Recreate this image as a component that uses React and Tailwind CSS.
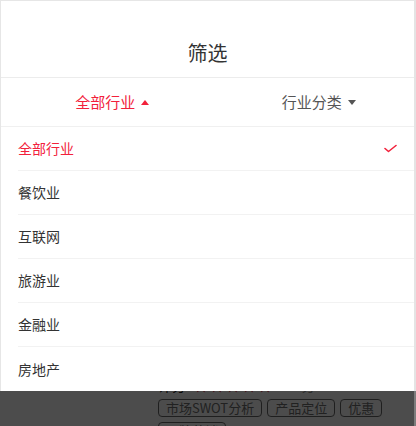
import React from "react";

const industries = ["全部行业", "餐饮业", "互联网", "旅游业", "金融业", "房地产"];

function Caret({ up, color }) {
  return up ? (
    <span
      className="inline-block h-0 w-0 border-x-[4px] border-b-[5px] border-x-transparent"
      style={{ borderBottomColor: color }}
    />
  ) : (
    <span
      className="inline-block h-0 w-0 border-x-[4px] border-t-[5px] border-x-transparent"
      style={{ borderTopColor: color }}
    />
  );
}

function Tag({ children }) {
  return (
    <span className="rounded-[4px] border border-[#6a6a6a] px-[7px] text-[13px] leading-[16px] text-[#707070]">
      {children}
    </span>
  );
}

export default function App() {
  return (
    <div
      className="flex h-[426px] w-[416px] overflow-hidden bg-white"
      style={{ fontFamily: '"Noto Sans CJK SC", "Noto Sans", sans-serif' }}
    >
      <div className="relative h-full w-[414px]">
        {/* page content behind the drawer */}
        <div className="flex flex-col pl-[158px] pt-[377px]">
          <div className="flex items-center gap-[8px] text-[14px] leading-[16px]">
            <span className="text-[#222]">评分</span>
            <span className="tracking-[2px] text-[#e0182f]">★★★★★</span>
            <span className="text-[#999]">4.8分</span>
          </div>
          <div className="mt-[6px] flex gap-[5px]">
            <Tag>市场SWOT分析</Tag>
            <Tag>产品定位</Tag>
            <Tag>优惠</Tag>
          </div>
          <div className="mt-[5px] flex gap-[5px]">
            <Tag>品牌营销</Tag>
          </div>
        </div>

        {/* dim mask */}
        <div className="absolute inset-0 bg-black/70" />

        {/* filter drawer */}
        <div className="absolute inset-x-0 top-0 flex flex-col border-l border-t border-[#e6e6e6] bg-white">
          <div className="flex h-[77px] justify-center border-b border-[#ececec] pt-[39px] text-[20px] leading-[26px] text-[#333]">
            筛选
          </div>
          <div className="flex h-[49px] border-b border-[#f0f0f0]">
            <div className="flex flex-1 items-center justify-center gap-[6px] pl-4 text-[15px] text-[#f2213b]">
              <span>全部行业</span>
              <Caret up color="#f2213b" />
            </div>
            <div className="flex flex-1 items-center justify-center gap-[6px] pl-4 text-[15px] text-[#555]">
              <span>行业分类</span>
              <Caret color="#555" />
            </div>
          </div>
          <ul className="flex flex-col pl-[17px]">
            {industries.map((name, i) => (
              <li
                key={name}
                className={`flex items-center justify-between pr-[17px] text-[14px] ${
                  i === 0 ? "text-[#f2213b]" : "text-[#333]"
                } ${
                  i < industries.length - 1
                    ? "h-[44px] border-b border-[#f2f2f2]"
                    : "h-[44px]"
                }`}
              >
                <span>{name}</span>
                {i === 0 && (
                  <svg width="13" height="9" viewBox="0 0 13 9" fill="none">
                    <path
                      d="M1 4.5 L4.5 7.5 L12 1.5"
                      stroke="#f2213b"
                      strokeWidth="1.6"
                      strokeLinecap="round"
                      strokeLinejoin="round"
                    />
                  </svg>
                )}
              </li>
            ))}
          </ul>
        </div>
      </div>
      <div className="flex h-full w-[2px] flex-col">
        <div className="h-[391px] bg-[#e4e4e4]" />
        <div className="flex-1 bg-[#7c7c7c]" />
      </div>
    </div>
  );
}
